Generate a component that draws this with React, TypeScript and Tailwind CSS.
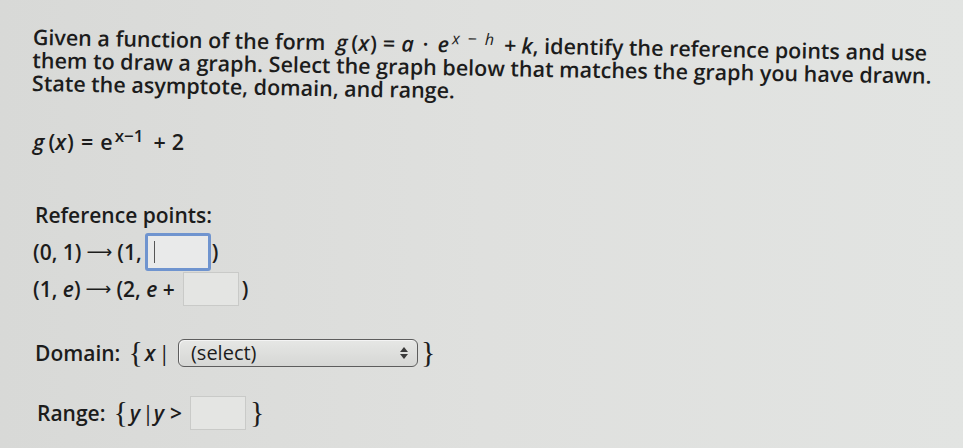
import React from "react";

const font = "font-['Open_Sans','Liberation_Sans',sans-serif]";

const UpDown = () => (
  <svg width="10" height="14" viewBox="0 0 10 14" className="text-[#3a3a3a]">
    <path d="M5 1 L9 6 H1 Z" fill="currentColor" />
    <path d="M5 13 L9 8 H1 Z" fill="currentColor" />
  </svg>
);

const Arrow = () => (
  <span className="mx-[5px] font-['DejaVu_Sans',sans-serif] text-[18px] font-normal">⟶</span>
);

const Brace = ({ c }: { c: string }) => (
  <span className="font-['Liberation_Serif',serif] text-[30px] font-normal leading-[24px]">{c}</span>
);

const Box = ({ focused = false, className = "" }: { focused?: boolean; className?: string }) =>
  focused ? (
    <span
      className={`inline-flex items-center rounded-[3px] border-[3px] border-[#6f94cf] bg-[#e9eaea] px-[6px] ${className}`}
    >
      <span className="h-[22px] w-[1.5px] bg-[#555]" />
    </span>
  ) : (
    <span className={`inline-block border border-[#c9cac8] bg-[#e4e5e3] ${className}`} />
  );

export default function App() {
  return (
    <div
      className={`${font} h-[448px] w-[963px] overflow-hidden bg-gradient-to-r from-[#d8d9d7] via-[#dfe0de] to-[#e2e4e2] text-[#1c1c1c]`}
    >
      <div className="pl-[33px] pt-[25px]">
        <p className="origin-top-left rotate-[1deg] whitespace-nowrap text-[21.5px] font-semibold leading-[23px]">
          Given a function of the form{" "}
          <span className="ml-[5px]">
            <i>g</i>
            <span className="ml-[4px]">(</span>
            <i>x</i>
            <span className="ml-[1px]">)</span>
            <span className="mx-[6px]">=</span>
            <i>a</i>
            <span className="mx-[9px]">·</span>
            <i>e</i>
            <sup className="ml-[3px] text-[16px] font-medium">
              <i>x</i>
              <span className="mx-[8px]">−</span>
              <i>h</i>
            </sup>
            <span className="ml-[10px] mr-[5px]">+</span>
            <i>k</i>
          </span>
          , identify the reference points and use
          <br />
          them to draw a graph. Select the graph below that matches the graph you have drawn.
          <br />
          State the asymptote, domain, and range.
        </p>

        <div className="mt-[36px] text-[21.5px] font-semibold leading-[24px]">
          <i>g</i>
          <span className="ml-[4px]">(</span>
          <i>x</i>
          <span className="ml-[1px]">)</span>
          <span className="mx-[7px]">=</span>
          e
          <sup className="ml-[2px] text-[17px]">x−1</sup>
          <span className="ml-[10px] mr-[6px]">+</span>2
        </div>

        <div className="mt-[49px] text-[21px] font-semibold leading-[24px]">
          <div className="pl-[2px]">Reference points:</div>
          <div className="mt-[6px] flex items-center">
            <span>(0, 1)</span>
            <Arrow />
            <span>(1,</span>
            <Box focused className="ml-[3px] h-[38px] w-[66px]" />
            <span className="ml-[1px]">)</span>
          </div>
          <div className="mt-[1px] flex items-center">
            <span>
              (1, <i>e</i>)
            </span>
            <Arrow />
            <span>
              (2, <i>e</i> +
            </span>
            <Box className="ml-[8px] h-[34px] w-[56px]" />
            <span className="ml-[3px]">)</span>
          </div>

          <div className="mt-[33px] flex items-center pl-[2px]">
            <span>Domain:</span>
            <span className="ml-[8px]">
              <Brace c="{" />
            </span>
            <i className="ml-[2px]">x</i>
            <span className="ml-[3px] font-normal">|</span>
            <span className="ml-[8px] flex h-[28px] w-[240px] items-center justify-between rounded-[6px] border-[1.5px] border-[#5d5d5d] bg-gradient-to-b from-[#e6e7e5] to-[#d6d7d5] pl-[12px] pr-[8px] text-[20px] font-medium shadow-[inset_1px_1px_0_#f4f4f4]">
              (select)
              <UpDown />
            </span>
            <span className="ml-[3px]">
              <Brace c="}" />
            </span>
          </div>

          <div className="mt-[29px] flex items-center pl-[4px]">
            <span>Range:</span>
            <span className="ml-[8px]">
              <Brace c="{" />
            </span>
            <i className="ml-[2px]">y</i>
            <span className="ml-[2px] font-normal">|</span>
            <i>y</i>
            <span className="ml-[6px]">&gt;</span>
            <Box className="ml-[8px] h-[34px] w-[56px]" />
            <span className="ml-[4px]">
              <Brace c="}" />
            </span>
          </div>
        </div>
      </div>
    </div>
  );
}
